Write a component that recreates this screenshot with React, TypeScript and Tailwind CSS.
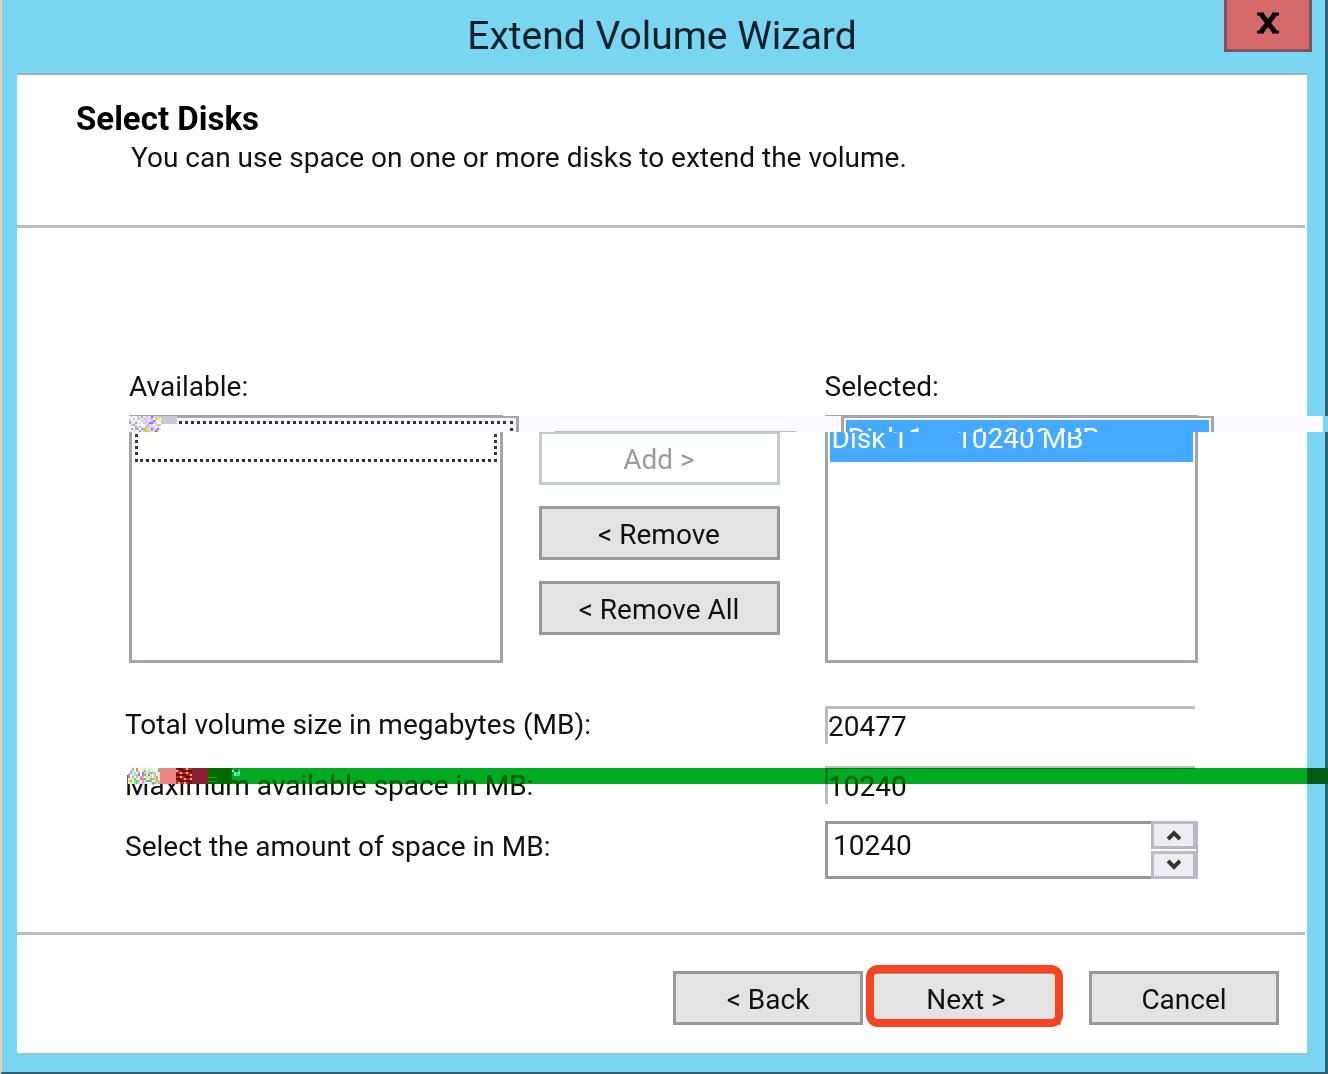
import { useState } from 'react'

type WizardButtonProps = {
  label: string
  className?: string
  disabled?: boolean
}

const buttonBase = 'h-[54px] border-[3px] pt-1 text-center leading-none'

function WizardButton({ label, className = '', disabled }: WizardButtonProps) {
  const tone = disabled
    ? 'border-[#c3cbcd] bg-white text-[#9c9c9c]'
    : 'border-[#999999] bg-[#e3e3e3] text-[#111111]'

  return (
    <button type="button" disabled={disabled} className={`${buttonBase} ${tone} ${className}`}>
      {label}
    </button>
  )
}

/* ================= DISPLAY CORRUPTION ================= */
const brightNoise = ['#ffffff', '#ff99ff', '#99ffff', '#ffffff', '#ffff44', '#ffccff', '#66ffcc', '#ff9944', '#ffffff', '#cc66ff', '#44ee44']
const redNoise = ['#8c1530', '#770022', '#8c1530', '#aa3311', '#550022', '#ffaa66', '#8c1530']
const sparkNoise = ['#00aa22', '#66ffcc', '#006c00', '#00aa22', '#33dd88']
const purpleNoise = ['#d9ccff', '#c8b8ff', '#e6dcff', '#ccee00', '#d9ccff', '#ffffff', '#9966ff', '#d9ccff']
const grayNoise = ['#ffffff', '#c9c7d4', '#e8e6f2', '#ffffff', '#aaa8bb', '#e8e6f2']

type NoiseProps = {
  x: number
  cols: number
  rows: number
  colors: string[]
}

function Noise({ x, cols, rows, colors }: NoiseProps) {
  return (
    <>
      {Array.from({ length: cols * rows }, (_, i) => (
        <rect
          key={i}
          x={x + (i % cols) * 2}
          y={Math.floor(i / cols) * 2}
          width="2"
          height="2"
          fill={colors[(i * 7 + ((i * i) % 13)) % colors.length]}
        />
      ))}
    </>
  )
}

function GreenBand() {
  return (
    <div aria-hidden="true" className="pointer-events-none absolute top-[768px] -right-[3px] left-[126px] h-4">
      <div className="absolute inset-0 bg-[#00aa22] mix-blend-multiply" />
      <div className="absolute inset-0 bg-[#006400] mix-blend-lighten" />
      <div className="absolute inset-y-0 right-0 w-[21px] bg-[#005a14]" />
      <svg className="absolute top-0 left-0" width="112" height="16" shapeRendering="crispEdges">
        <Noise x={0} cols={16} rows={8} colors={brightNoise} />
        <rect x="32" width="16" height="16" fill="#ee8585" />
        <Noise x={48} cols={8} rows={8} colors={redNoise} />
        <rect x="64" width="16" height="16" fill="#8c2035" />
        <rect x="80" width="24" height="16" fill="#006c00" />
        <path d="M80 9h9M80 13h9" stroke="#00aa22" />
        <Noise x={104} cols={4} rows={4} colors={sparkNoise} />
      </svg>
    </div>
  )
}

function PaleBand() {
  return (
    <div aria-hidden="true" className="pointer-events-none absolute top-[416px] -right-[3px] left-[501px] flex h-4">
      <div className="flex-1 bg-[#fdfbff]">
        <div className="mt-[15px] ml-[52px] h-px w-[241px] bg-[#b9b9dd]" />
      </div>
      <div className="w-[5px] bg-[#7ad5f1]" />
    </div>
  )
}

const shiftedStrip = 'pointer-events-none absolute -top-[2px] -left-[3px] -right-[19px] z-10 h-4 overflow-hidden bg-[#fdfbff] pl-4'

export default function App() {
  const [amount, setAmount] = useState(10240)

  return (
    <div className="relative flex min-h-screen flex-col border-r-[3px] border-b-2 border-l-2 border-r-[#2f5f70] border-b-[#2f5f70] border-l-[#f5cdb0] bg-[#7ad5f1] pr-[18px] pb-[17px] pl-[15px] font-[Roboto,sans-serif] text-[28px] text-[#111111]">
      <header className="relative flex h-[73px] items-start justify-center pt-[14px]">
        <h1 className="text-[39px] leading-[44px] text-[#06202a]">Extend Volume Wizard</h1>
        <button
          type="button"
          aria-label="Close"
          className="absolute top-0 -right-[5px] flex h-[52px] w-[88px] justify-center border-[3px] border-t-0 border-[#7b5560] bg-[#d66a6a] pt-[12px]"
        >
          <svg width="24" height="22" viewBox="0 0 24 22" fill="none" stroke="#000">
            <path d="M5 2L19 20M19 2L5 20" strokeWidth="5" />
            <path d="M1 2h7M16 2h7M1 20h7M16 20h7" strokeWidth="3" />
          </svg>
        </button>
      </header>

      <main className="flex flex-1 flex-col border-t-2 border-b-2 border-t-[#98b4c4] border-b-[#98c4d0] bg-white">
        <section className="mr-[2px] h-[153px] border-b-[3px] border-[#bdbdbd] pt-[26px] pl-[59px]">
          <h2 className="text-[33px] leading-[36px] font-bold text-black">Select Disks</h2>
          <p className="pl-[55px] leading-[42px]">You can use space on one or more disks to extend the volume.</p>
        </section>

        {/* ================= DISK LISTS ================= */}
        <section className="mt-[139px] mr-[109px] ml-[112px] flex">
          <div className="flex-1">
            <h3 id="available" className="h-[48px] leading-[40px]">Available:</h3>
            <ul role="listbox" aria-labelledby="available" className="relative h-[248px] border-[3px] border-[#a5a3b0] p-[3px]">
              <li role="option" aria-selected="false" className="h-[41px] border-[3px] border-dotted border-[#333333]" />
              <li aria-hidden="true" className={shiftedStrip}>
                <div className="h-[60px] border-t-2 border-r-[3px] border-[#a5a3c0] p-[3px]">
                  <div className="h-[41px] border-[3px] border-dotted border-[#333333]" />
                </div>
                <svg className="absolute top-0 left-0" width="48" height="16" shapeRendering="crispEdges">
                  <Noise x={0} cols={8} rows={8} colors={grayNoise} />
                  <Noise x={16} cols={8} rows={8} colors={purpleNoise} />
                  <rect x="32" width="16" height="16" fill="#fdfbff" />
                  <rect x="32" width="16" height="8" fill="#c9c7d4" />
                </svg>
              </li>
            </ul>
          </div>

          <div className="mr-[45px] ml-[36px] flex w-[241px] flex-col gap-[21px] pt-[64px]">
            <WizardButton label="Add >" disabled />
            <WizardButton label="< Remove" />
            <WizardButton label="< Remove All" />
          </div>

          <div className="flex-1">
            <h3 id="selected" className="h-[48px] leading-[40px]">Selected:</h3>
            <ul role="listbox" aria-labelledby="selected" className="relative h-[248px] border-[3px] border-[#a5a3b0] p-[2px]">
              <li role="option" aria-selected="true" className="flex h-[42px] gap-[48px] bg-[#45aaff] pl-[2px] leading-[38px] text-white">
                <span>Disk 1</span>
                <span>10240 MB</span>
              </li>
              <li aria-hidden="true" className={shiftedStrip}>
                <div className="h-[60px] border-x-[3px] border-t-2 border-[#a5a3c0] p-[2px]">
                  <div className="flex h-[42px] gap-[48px] bg-[#45aaff] pl-[2px] leading-[38px] text-white">
                    <span>Disk 1</span>
                    <span>10240 MB</span>
                  </div>
                </div>
              </li>
            </ul>
          </div>
        </section>

        {/* ================= SIZES ================= */}
        <section className="mt-[43px] mr-[109px] ml-[108px] grid grid-cols-[1fr_373px]">
          <label htmlFor="total" className="leading-[38px]">Total volume size in megabytes (MB):</label>
          <input id="total" readOnly value="20477" className="mr-[3px] mb-[22px] h-[38px] border-t-[3px] border-l-[3px] border-[#bdbdbd] outline-none" />
          <label htmlFor="maximum" className="leading-[40px]">Maximum available space in MB:</label>
          <input id="maximum" readOnly value="10240" className="mr-[3px] mb-[17px] h-[38px] border-t-[3px] border-l-[3px] border-[#bdbdbd] outline-none" />
          <label htmlFor="amount" className="leading-[52px]">Select the amount of space in MB:</label>
          <div className="flex h-[58px]">
            <input
              id="amount"
              className="min-w-0 flex-1 border-[3px] border-r-0 border-[#999999] pb-2 pl-[5px] outline-none"
              value={amount}
              onChange={e => setAmount(Number(e.target.value) || 0)}
            />
            <div className="flex w-[47px] flex-col justify-between border-r-2 border-[#bbb9c9] bg-white">
              <button type="button" aria-label="Increase" onClick={() => setAmount(amount + 1)} className="flex h-[28px] items-center justify-center border-[3px] border-[#bbb9c9] bg-[#eeeef1]">
                <svg width="14" height="12" viewBox="0 0 14 12" fill="none" stroke="#333" strokeWidth="4"><path d="M1 10L7 4L13 10" /></svg>
              </button>
              <button type="button" aria-label="Decrease" onClick={() => setAmount(amount - 1)} className="flex h-[28px] items-center justify-center border-[3px] border-[#bbb9c9] bg-[#eeeef1]">
                <svg width="14" height="12" viewBox="0 0 14 12" fill="none" stroke="#333" strokeWidth="4"><path d="M1 2L7 8L13 2" /></svg>
              </button>
            </div>
          </div>
        </section>

        <footer className="mt-auto mr-[2px] flex h-[121px] items-start justify-end border-t-[3px] border-[#bdbdbd] pt-[36px] pr-[26px]">
          <WizardButton label="< Back" className="w-[190px]" />
          <div className="relative mr-[28px] ml-[8px]">
            <WizardButton label="Next >" className="w-[190px]" />
            <span className="pointer-events-none absolute -top-[6px] -right-[2px] -bottom-[2px] -left-[5px] rounded-xl border-8 border-[#f64423]" />
          </div>
          <WizardButton label="Cancel" className="w-[190px]" />
        </footer>
      </main>

      <PaleBand />
      <GreenBand />
    </div>
  )
}
